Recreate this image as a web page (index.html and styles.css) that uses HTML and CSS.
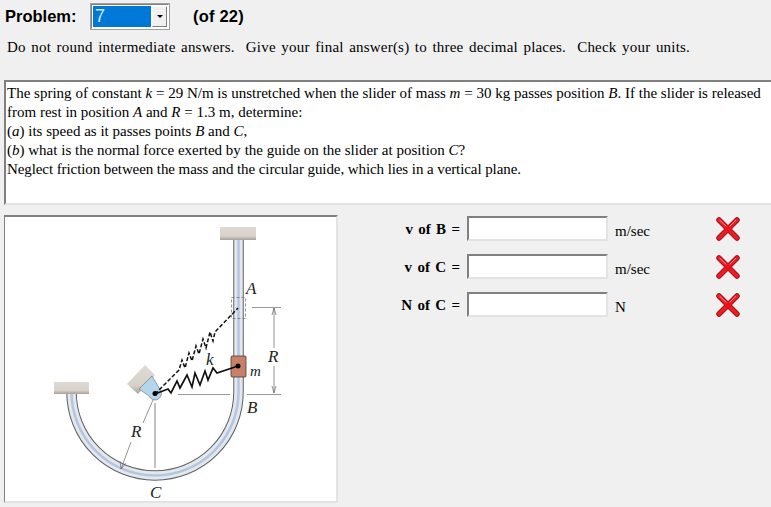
FILE: index.html
```html
<!DOCTYPE html>
<html lang="en">
  <head>
    <meta charset="UTF-8" />
    <title>Problem 7</title>
    <link rel="stylesheet" href="styles.css">
  </head>
  <body>
    <div class="topbar">
      <span class="problem-label">Problem:</span>
      <div class="picker">
        <span class="picker-value">7</span>
        <span class="picker-btn"><i class="picker-arrow"></i></span>
      </div>
      <span class="problem-count">(of 22)</span>
    </div>
    <p class="hint">Do not round intermediate answers.&nbsp; Give your final answer(s) to three decimal places.&nbsp; Check your units.</p>

    <div class="statement">
      The spring of constant <i>k</i> = 29 N/m is unstretched when the slider of mass <i>m</i> = 30 kg passes position <i>B</i>. If the slider is released<br>
      from rest in position <i>A</i> and <i>R</i> = 1.3 m, determine:<br>
      (<i>a</i>) its speed as it passes points <i>B</i> and <i>C</i>,<br>
      (<i>b</i>) what is the normal force exerted by the guide on the slider at position <i>C</i>?<br>
      <span class="tight">Neglect friction between the mass and the circular guide, which lies in a vertical plane.</span>
    </div>

    <div class="work">
      <div class="figure">
        <svg class="diagram" viewBox="5 217 331 284" width="331" height="284">
          <defs>
            <linearGradient id="capfill" x1="0" y1="0" x2="0" y2="1">
              <stop offset="0" stop-color="#ded9d3" />
              <stop offset="0.7" stop-color="#d8d2cb" />
              <stop offset="1" stop-color="#a8a198" />
            </linearGradient>
          </defs>
          <!-- curved guide -->
          <path d="M71.500 392 A83.500 83.500 0 0 0 238.500 392 L238.500 238" class="guide-outer" />
          <path d="M71.500 392 A83.500 83.500 0 0 0 238.500 392 L238.500 238" class="guide-mid" />
          <path d="M71.500 392 A83.500 83.500 0 0 0 238.500 392 L238.500 238" class="guide-inner" />
          <!-- supports -->
          <rect x="220" y="227" width="36" height="13" class="cap" />
          <rect x="54" y="382" width="35" height="12" class="cap" />
          <polygon points="127,384 145,365 155,375 138,394" class="cap" />
          <path d="M139 389 L152 376 L161 391 A6.500 6.500 0 0 1 149 396 Z" class="mount" />
          <!-- dimension lines -->
          <path d="M178 394.500 H230 M247 394.500 H281 M252 307.500 H281 M155 403 V468" class="thin" />
          <path d="M274 308 V348 M274 366 V393 M153 400 L143 423 M131 442 L121 469" class="hair" />
          <path d="M272 315 L274 308 L276 315 M272 386 L274 393 L276 386 M120 461 L121 469 L126 463" class="hair" />
          <!-- slider positions -->
          <rect x="231.500" y="297.500" width="14" height="21" class="ghost" />
          <rect x="231" y="356" width="15" height="21" rx="1" class="slider" />
          <!-- springs -->
          <path d="M155 394 L179 370 L182 360 L185 368 L189 353 L192 361 L196 346 L199 354 L203 339 L206 348 L210 332 L213 341 L215 332 L238 308" class="spring-dash" />
          <path d="M155 394 L168 389 L171 393 L177 381 L180 388 L187 375 L192 387 L195 373 L200 385 L205 371 L208 380 L213 368 L217 373 L238 366" class="spring" />
          <circle cx="155" cy="393.500" r="2.500" />
          <circle cx="238" cy="366" r="2.500" />
          <!-- labels -->
          <text x="246" y="294" class="lbl">A</text>
          <text x="268" y="362" class="lbl">R</text>
          <text x="206" y="365" class="lbl">k</text>
          <text x="250" y="376" class="lbl lbl-small">m</text>
          <text x="247" y="413" class="lbl">B</text>
          <text x="131" y="437" class="lbl">R</text>
          <text x="150" y="498" class="lbl">C</text>
        </svg>
      </div>

      <div class="answers">
        <label class="answer-label">v of B =</label>
        <input class="answer-input" type="text">
        <span class="unit">m/sec</span>
        <svg class="wrong" viewBox="0 0 24 24" width="24" height="24"><use href="#cross" /></svg>

        <label class="answer-label">v of C =</label>
        <input class="answer-input" type="text">
        <span class="unit">m/sec</span>
        <svg class="wrong" viewBox="0 0 24 24" width="24" height="24"><use href="#cross" /></svg>

        <label class="answer-label">N of C =</label>
        <input class="answer-input" type="text">
        <span class="unit">N</span>
        <svg class="wrong" viewBox="0 0 24 24" width="24" height="24"><use href="#cross" /></svg>
      </div>
    </div>

    <svg width="0" height="0" class="defs">
      <defs>
        <g id="cross">
          <path d="M3 3 L21 21 M21 3 L3 21" stroke="#a3141c" stroke-width="5.500" stroke-linecap="round" />
          <path d="M3 3 L21 21 M21 3 L3 21" stroke="#ee1c25" stroke-width="3.500" stroke-linecap="round" />
          <path d="M3.500 3 L12 11 M20 3 L13 10" stroke="#f98a8a" stroke-width="1" />
          <circle cx="12" cy="12" r="3" fill="#f01018" />
        </g>
      </defs>
    </svg>
  </body>
</html>
```

FILE: styles.css
```css
html,
body {
  margin: 0;
  padding: 0;
}
body {
  height: 507px;
  overflow: hidden;
  background: #f0f0f0;
  color: #000;
  font-family: 'Liberation Serif', serif;
  font-size: 15px;
}
.topbar {
  display: flex;
  align-items: center;
  height: 33px;
  font: bold 16.500px 'Liberation Sans', sans-serif;
}
.problem-label {
  margin-left: 5px;
  width: 85px;
}
.picker {
  display: flex;
  box-sizing: border-box;
  width: 80px;
  height: 27px;
  border: 2px solid;
  border-color: #808080 #fff #fff #808080;
  outline: 1px solid #a0a0a0;
  outline-offset: -1px;
  padding: 1px;
  background: #fff;
}
.picker-value {
  width: 56px;
  padding-left: 2px;
  background: #0078d7;
  color: #cfe6fa;
  font: 18px/21px 'Liberation Sans', sans-serif;
}
.picker-btn {
  display: flex;
  flex: 1;
  align-items: center;
  justify-content: center;
  margin-left: 1px;
  background: #f0f0f0;
  border: 1px solid;
  border-color: #f8f8f8 #808080 #808080 #f8f8f8;
}
.picker-arrow {
  border-top: 3px solid #000;
  border-left: 3px solid transparent;
  border-right: 3px solid transparent;
}
.problem-count {
  margin-left: 23px;
  letter-spacing: 0.200px;
}
.hint {
  height: 41px;
  margin: 6px 0 0 7px;
  line-height: 17px;
  letter-spacing: 0.200px;
  word-spacing: 1.600px;
}
.statement {
  box-sizing: border-box;
  height: 125px;
  margin-left: 4px;
  padding: 2px 0 0 1px;
  background: #fff;
  border-top: 2px solid #808080;
  border-left: 2px solid #808080;
  border-bottom: 2px solid #e3e3e3;
  line-height: 19px;
  word-spacing: 0.030px;
  white-space: nowrap;
}
.tight {
  letter-spacing: -0.090px;
}
.work {
  display: flex;
  margin-top: 10px;
}
.figure {
  box-sizing: border-box;
  width: 334px;
  height: 288px;
  margin-left: 4px;
  background: #fff;
  border-top: 2px solid #808080;
  border-left: 1px solid #808080;
  border-right: 2px solid #e3e3e3;
  border-bottom: 2px solid #e3e3e3;
}
.diagram {
  display: block;
}
.guide-outer {
  fill: none;
  stroke: #5f6266;
  stroke-width: 10.500;
}
.guide-mid {
  fill: none;
  stroke: #e4e7eb;
  stroke-width: 8.500;
}
.guide-inner {
  fill: none;
  stroke: #b3c6e0;
  stroke-width: 2.500;
}
.cap {
  fill: url(#capfill);
}
.mount {
  fill: #b3d6ea;
  stroke: #555;
  stroke-width: 0.500;
}
.thin {
  fill: none;
  stroke: #999;
  stroke-width: 1.200;
}
.hair {
  fill: none;
  stroke: #666;
  stroke-width: 0.700;
}
.ghost {
  fill: none;
  stroke: #777;
  stroke-width: 0.800;
  stroke-dasharray: 3 2;
}
.slider {
  fill: #c9806a;
  stroke: #4a3a33;
  stroke-width: 0.800;
}
.spring {
  fill: none;
  stroke: #111;
  stroke-width: 1.700;
}
.spring-dash {
  fill: none;
  stroke: #111;
  stroke-width: 1.500;
  stroke-dasharray: 4 2;
}
.lbl {
  font: italic 17px 'Liberation Serif', serif;
  fill: #222;
}
.lbl-small {
  font-size: 15px;
}
.answers {
  display: grid;
  grid-template-columns: 129px 141px 108px 24px;
  grid-auto-rows: 25px;
  row-gap: 13px;
  align-items: center;
  margin-top: 1px;
  align-self: flex-start;
}
.answer-label {
  padding: 0 7px 0 0;
  font-weight: bold;
  text-align: right;
  word-spacing: 1.600px;
  line-height: 23px;
  height: 21px;
}
.answer-input {
  box-sizing: border-box;
  width: 141px;
  height: 25px;
  padding: 0;
  background: #fff;
  border: 2px solid;
  border-color: #808080 #e3e3e3 #e3e3e3 #808080;
  outline: none;
}
.unit {
  margin-left: 7px;
  padding-top: 6px;
}
.wrong {
  display: block;
}
.defs {
  position: absolute;
}
```
